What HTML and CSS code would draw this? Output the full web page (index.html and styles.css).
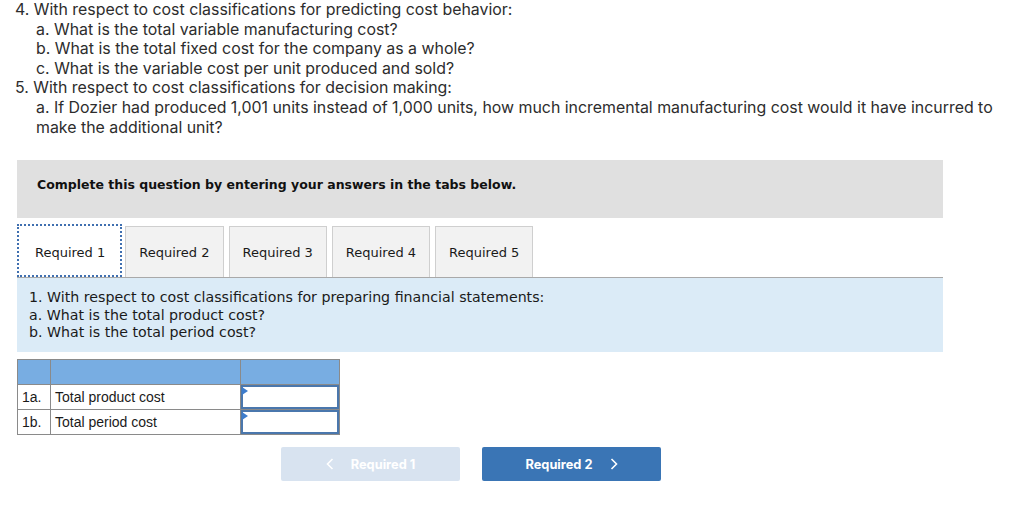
FILE: index.html
```html
<!DOCTYPE html>
<html>
<head>
<meta charset="utf-8">
<link rel="stylesheet" href="styles.css">
</head>
<body>
<div class="questions">
  <div class="q">4. With respect to cost classifications for predicting cost behavior:</div>
  <div class="sub">a. What is the total variable manufacturing cost?</div>
  <div class="sub">b. What is the total fixed cost for the company as a whole?</div>
  <div class="sub">c. What is the variable cost per unit produced and sold?</div>
  <div class="q">5. With respect to cost classifications for decision making:</div>
  <div class="sub">a. If Dozier had produced 1,001 units instead of 1,000 units, how much incremental manufacturing cost would it have incurred to make the additional unit?</div>
</div>

<div class="widget">
  <div class="instruct">Complete this question by entering your answers in the tabs below.</div>

  <div class="tabs">
    <div class="tab active">Required 1</div>
    <div class="tab">Required 2</div>
    <div class="tab">Required 3</div>
    <div class="tab">Required 4</div>
    <div class="tab">Required 5</div>
  </div>

  <div class="panel">
    <div>1. With respect to cost classifications for preparing financial statements:</div>
    <div>a. What is the total product cost?</div>
    <div>b. What is the total period cost?</div>
  </div>

  <table class="answers">
    <tr class="head"><td class="c1"></td><td class="c2"></td><td class="c3"></td></tr>
    <tr><td class="c1">1a.</td><td class="c2">Total product cost</td><td class="c3"><div class="inp"><span class="tri"></span></div></td></tr>
    <tr><td class="c1">1b.</td><td class="c2">Total period cost</td><td class="c3"><div class="inp"><span class="tri"></span></div></td></tr>
  </table>

  <div class="nav">
    <div class="btn prev">
      <svg class="chev" width="8" height="12" viewBox="0 0 8 12"><polyline points="6.5,1 1.5,6 6.5,11" fill="none" stroke="#ffffff" stroke-width="1.6"/></svg>
      <span>Required 1</span>
    </div>
    <div class="btn next">
      <span>Required 2</span>
      <svg class="chev" width="8" height="12" viewBox="0 0 8 12"><polyline points="1.5,1 6.5,6 1.5,11" fill="none" stroke="#ffffff" stroke-width="1.6"/></svg>
    </div>
  </div>
</div>
</body>
</html>
```
FILE: styles.css
```css
html, body {
  margin: 0;
  padding: 0;
  background: #ffffff;
}

body {
  color: #2b2b2b;
}

.questions {
  font-family: "Inter", "Liberation Sans", sans-serif;
  font-size: 15.9px;
  line-height: 19.6px;
  padding: 0 6px 0 15px;
  color: #2d2d2d;
}

.questions .sub {
  padding-left: 21px;
}

.widget {
  margin: 23px 0 0 17px;
  width: 926px;
}

.instruct {
  background: #e0e0e0;
  height: 58px;
  box-sizing: border-box;
  padding: 17px 0 0 20px;
  line-height: 15px;
  font-family: "DejaVu Sans", "Liberation Sans", sans-serif;
  font-weight: bold;
  font-size: 12.5px;
  color: #111;
}

.tabs {
  display: flex;
  gap: 5px;
  margin-top: 8px;
  border-bottom: 1px solid #a9a9a9;
  font-family: "DejaVu Sans", sans-serif;
  font-size: 13px;
  color: #1a1a1a;
}

.tab {
  height: 51px;
  padding: 0 13px 0 13px;
  display: flex;
  align-items: center;
  background: #f2f2f2;
  border: 1px solid #cfcfcf;
  border-bottom: none;
  box-sizing: border-box;
}

.tab.active {
  background: #ffffff;
  border: 2px dotted #3f6fb0;
  height: 53px;
  margin-top: -2px;
  margin-bottom: -2px;
  margin-right: -2px;
  padding: 3px 15px 0 16px;
}

.panel {
  background: #dbebf7;
  padding: 11px 12px 11px 12px;
  height: 74px;
  box-sizing: border-box;
  font-family: "DejaVu Sans", sans-serif;
  font-size: 14.2px;
  line-height: 17.5px;
  color: #1a1a1a;
}

.answers {
  margin-top: 7px;
  border-collapse: collapse;
  font-family: "Liberation Sans", Arial, sans-serif;
  font-size: 14px;
  color: #1a1a1a;
}

.answers td {
  border: 1px solid #8a8a8a;
  height: 24px;
  padding: 0;
}

.answers .head td {
  background: #78ade2;
}

.answers .c1 {
  width: 33px;
  padding-left: 4px;
  box-sizing: border-box;
}

.answers .c2 {
  width: 190px;
  padding-left: 4px;
  box-sizing: border-box;
}

.answers .c3 {
  width: 98px;
}

.inp {
  position: relative;
  height: 24px;
  border: 2px solid #4a77ad;
  box-sizing: border-box;
  background: #fff;
}

.tri {
  position: absolute;
  left: -1px;
  top: 0;
  width: 0;
  height: 0;
  border-top: 4px solid transparent;
  border-bottom: 4px solid transparent;
  border-left: 6px solid #3d7ccc;
}

.nav {
  display: flex;
  gap: 22px;
  margin-top: 12px;
  padding-left: 264px;
  font-family: "Inter", "Roboto", sans-serif;
  font-weight: bold;
  font-size: 12.8px;
  color: #ffffff;
}

.btn {
  width: 179px;
  height: 34px;
  border-radius: 2px;
  display: flex;
  align-items: center;
  justify-content: center;
  gap: 17px;
}

.chev {
  display: block;
}

.prev {
  background: #d8e3f0;
}

.next {
  background: #3a75b5;
}
```
